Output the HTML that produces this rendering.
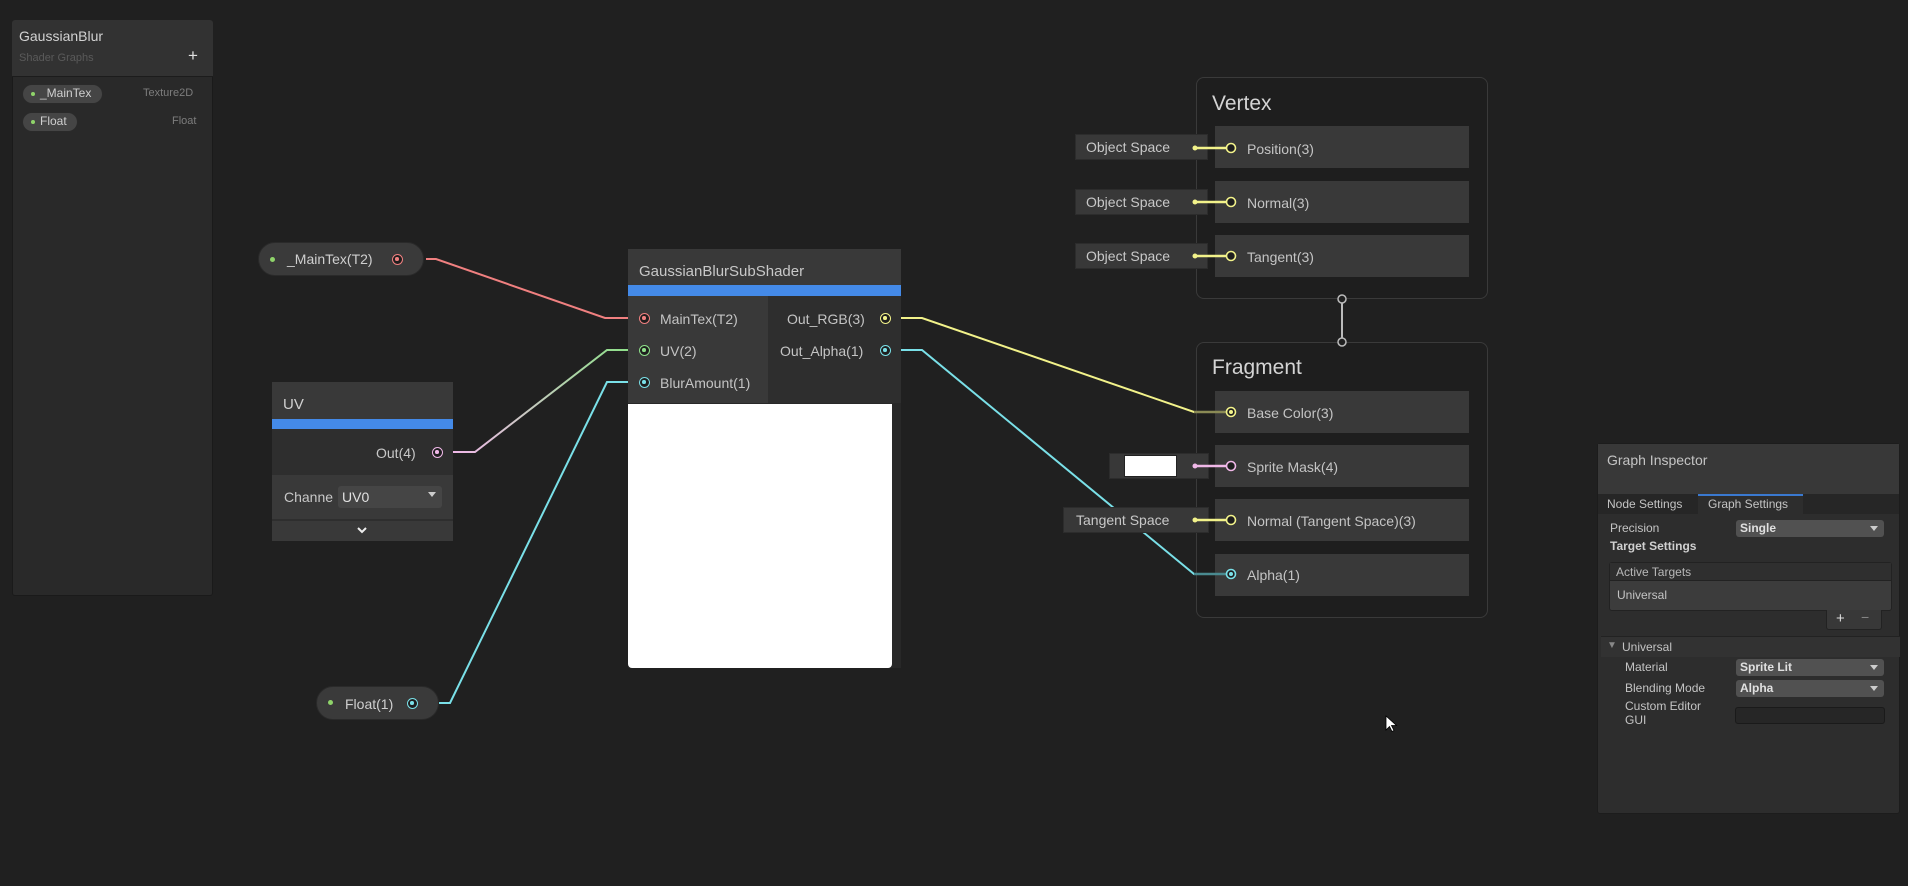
<!DOCTYPE html>
<html><head><meta charset="utf-8"><style>
*{box-sizing:border-box;margin:0;padding:0}
body{width:1908px;height:886px;background:#202020;position:relative;overflow:hidden;font-family:"Liberation Sans",sans-serif;color:#c4c4c4}
.a{position:absolute}
.t{position:absolute;white-space:nowrap}
.pill{position:absolute;background:#3a3a3a;border-radius:18px;border:1px solid #2a2a2a}
.dot{position:absolute;width:5px;height:5px;border-radius:50%;background:#8fd46a}
.port{position:absolute;width:11px;height:11px;border-radius:50%;border:1.6px solid;background:#1e1e1e}
.port i{position:absolute;left:2.2px;top:2.2px;width:3.6px;height:3.6px;border-radius:50%}
.row{position:absolute;background:#393939;left:1215px;width:254px;height:42px}
.box{position:absolute;background:#383838;border:1px solid #2c2c2c;font-size:14px;color:#c8c8c8}
.dd{position:absolute;background:#515151;border-radius:3px;height:17px;font-size:12px;font-weight:bold;color:#e0e0e0;padding:1px 4px}
.dd:after{content:"";position:absolute;right:6px;top:6px;border:4px solid transparent;border-top:5px solid #ccc;border-bottom:0}
</style></head><body>

<!-- blackboard -->
<div class="a" style="left:12px;top:20px;width:201px;height:576px;background:#292929;border:1px solid #1a1a1a;border-radius:3px"></div>
<div class="a" style="left:12px;top:20px;width:201px;height:57px;background:#323232;border-radius:3px 3px 0 0;border-bottom:1px solid #1c1c1c"></div>
<div class="t" style="left:19px;top:28px;font-size:14px;color:#d2d2d2">GaussianBlur</div>
<div class="t" style="left:19px;top:52px;font-size:11px;color:#5a5a5a">Shader Graphs</div>
<div class="t" style="left:188px;top:46px;font-size:17px;color:#e0e0e0">+</div>
<div class="pill" style="left:22px;top:84px;width:81px;height:20px;background:#454545"></div><div class="dot" style="left:31px;top:92px;width:4px;height:4px"></div>
<div class="t" style="left:40px;top:86px;font-size:12px;color:#cfcfcf">_MainTex</div>
<div class="t" style="left:143px;top:87px;font-size:11px;color:#7d7d7d">Texture2D</div>
<div class="pill" style="left:22px;top:112px;width:56px;height:20px;background:#454545"></div><div class="dot" style="left:31px;top:120px;width:4px;height:4px"></div>
<div class="t" style="left:40px;top:114px;font-size:12px;color:#cfcfcf">Float</div>
<div class="t" style="left:172px;top:115px;font-size:11px;color:#7d7d7d">Float</div>

<!-- wires -->
<svg class="a" style="left:0;top:0" width="1908" height="886">
<defs><linearGradient id="g" gradientUnits="userSpaceOnUse" x1="453" y1="452" x2="628" y2="350"><stop offset="0" stop-color="#f0b8e8"/><stop offset="1" stop-color="#8fe08a"/></linearGradient></defs>
<g fill="none" stroke-width="2">
<polyline points="426,259 436,259 605,318 628,318" stroke="#f08080"/>
<polyline points="453,452 475,452 607,350 628,350" stroke="url(#g)"/>
<polyline points="439,703 450,703 607,382 628,382" stroke="#7ae0e8"/>
<polyline points="900,318 922,318 1194,412 1215,412" stroke="#f2f28a"/>
<polyline points="900,350 922,350 1194,574 1215,574" stroke="#7ae0e8"/>
</g>
</svg>

<!-- _MainTex pill -->
<div class="pill" style="left:258px;top:242px;width:166px;height:34px"></div>
<div class="dot" style="left:270px;top:257px"></div>
<div class="t" style="left:287px;top:251px;font-size:14px;color:#cfcfcf">_MainTex(T2)</div>
<div class="port" style="left:392px;top:254px;border-color:#f08080"><i style="background:#f08080"></i></div>

<!-- Float pill -->
<div class="pill" style="left:316px;top:686px;width:123px;height:34px"></div>
<div class="dot" style="left:328px;top:700px"></div>
<div class="t" style="left:345px;top:696px;font-size:14px;color:#cfcfcf">Float(1)</div>
<div class="port" style="left:407px;top:698px;border-color:#7ae0e8"><i style="background:#7ae0e8"></i></div>

<!-- UV node -->
<div class="a" style="left:272px;top:382px;width:181px;height:159px;background:#2e2e2e"></div>
<div class="a" style="left:272px;top:382px;width:181px;height:37px;background:#393939"></div>
<div class="t" style="left:283px;top:396px;font-size:15px;color:#d0d0d0">UV</div>
<div class="a" style="left:272px;top:419px;width:181px;height:10px;background:#448ae8"></div>
<div class="a" style="left:272px;top:429px;width:181px;height:44px;background:#2e2e2e"></div>
<div class="t" style="left:376px;top:445px;font-size:14px;color:#c8c8c8">Out(4)</div>
<div class="port" style="left:432px;top:447px;border-color:#f0b8e8"><i style="background:#f0b8e8"></i></div>
<div class="a" style="left:272px;top:475px;width:181px;height:44px;background:#393939"></div>
<div class="t" style="left:284px;top:489px;font-size:14px;color:#c8c8c8">Channe</div>
<div class="dd" style="left:338px;top:486px;width:104px;height:22px;background:#454545;font-weight:normal;font-size:14px;padding:3px 4px">UV0</div>
<div class="a" style="left:272px;top:521px;width:181px;height:20px;background:#393939"></div>
<svg class="a" style="left:355px;top:525px" width="14" height="10"><path d="M3 3 L7 7 L11 3" fill="none" stroke="#eee" stroke-width="2"/></svg>

<!-- Subshader node -->
<div class="a" style="left:628px;top:249px;width:273px;height:419px;background:#282828"></div>
<div class="a" style="left:628px;top:249px;width:273px;height:36px;background:#393939"></div>
<div class="t" style="left:639px;top:263px;font-size:15px;color:#c8c8c8">GaussianBlurSubShader</div>
<div class="a" style="left:628px;top:285px;width:273px;height:11px;background:#448ae8"></div>
<div class="a" style="left:628px;top:296px;width:140px;height:107px;background:#393939"></div>
<div class="a" style="left:768px;top:296px;width:133px;height:107px;background:#2e2e2e"></div>
<div class="port" style="left:639px;top:313px;border-color:#f08080"><i style="background:#f08080"></i></div>
<div class="t" style="left:660px;top:311px;font-size:14px">MainTex(T2)</div>
<div class="port" style="left:639px;top:345px;border-color:#8fe08a"><i style="background:#8fe08a"></i></div>
<div class="t" style="left:660px;top:343px;font-size:14px">UV(2)</div>
<div class="port" style="left:639px;top:377px;border-color:#7ae0e8"><i style="background:#7ae0e8"></i></div>
<div class="t" style="left:660px;top:375px;font-size:14px">BlurAmount(1)</div>
<div class="t" style="left:787px;top:311px;font-size:14px">Out_RGB(3)</div>
<div class="port" style="left:880px;top:313px;border-color:#f2f28a"><i style="background:#f2f28a"></i></div>
<div class="t" style="left:780px;top:343px;font-size:14px">Out_Alpha(1)</div>
<div class="port" style="left:880px;top:345px;border-color:#7ae0e8"><i style="background:#7ae0e8"></i></div>
<div class="a" style="left:628px;top:404px;width:264px;height:264px;background:#fff;border-radius:0 0 4px 4px"></div>

<!-- Vertex -->
<div class="a" style="left:1196px;top:77px;width:292px;height:222px;border:1.5px solid #3a3a3a;border-radius:8px;background:#1e1e1e"></div>
<div class="t" style="left:1212px;top:92px;font-size:21px;color:#d4d4d4">Vertex</div>
<div class="row" style="top:126px"></div><div class="row" style="top:181px"></div><div class="row" style="top:235px"></div>
<div class="box" style="left:1075px;top:134px;width:133px;height:26px;padding:4px 10px">Object Space</div>
<div class="box" style="left:1075px;top:189px;width:133px;height:26px;padding:4px 10px">Object Space</div>
<div class="box" style="left:1075px;top:243px;width:133px;height:26px;padding:4px 10px">Object Space</div>
<div class="t" style="left:1247px;top:141px;font-size:14px">Position(3)</div>
<div class="t" style="left:1247px;top:195px;font-size:14px">Normal(3)</div>
<div class="t" style="left:1247px;top:249px;font-size:14px">Tangent(3)</div>

<!-- Fragment -->
<div class="a" style="left:1196px;top:342px;width:292px;height:276px;border:1.5px solid #3a3a3a;border-radius:8px;background:#1e1e1e"></div>
<div class="t" style="left:1212px;top:356px;font-size:21px;color:#d4d4d4">Fragment</div>
<div class="row" style="top:391px"></div><div class="row" style="top:445px"></div><div class="row" style="top:499px"></div><div class="row" style="top:554px"></div>
<div class="box" style="left:1109px;top:453px;width:100px;height:26px"></div>
<div class="a" style="left:1124px;top:455px;width:53px;height:22px;background:#fff;border:1px solid #222"></div>
<div class="box" style="left:1063px;top:507px;width:146px;height:26px;padding:4px 12px">Tangent Space</div>
<div class="t" style="left:1247px;top:405px;font-size:14px">Base Color(3)</div>
<div class="t" style="left:1247px;top:459px;font-size:14px">Sprite Mask(4)</div>
<div class="t" style="left:1247px;top:513px;font-size:14px">Normal (Tangent Space)(3)</div>
<div class="t" style="left:1247px;top:567px;font-size:14px">Alpha(1)</div>

<svg class="a" style="left:0;top:0" width="1908" height="886">
<g stroke-width="2.5">
<line x1="1195" y1="148" x2="1226" y2="148" stroke="#f2f28a"/>
<line x1="1195" y1="202" x2="1226" y2="202" stroke="#f2f28a"/>
<line x1="1195" y1="256" x2="1226" y2="256" stroke="#f2f28a"/>
<line x1="1195" y1="466" x2="1226" y2="466" stroke="#f0b8e8"/>
<line x1="1195" y1="520" x2="1226" y2="520" stroke="#f2f28a"/>
<line x1="1194" y1="412" x2="1226" y2="412" stroke="#8a8a55"/>
<line x1="1194" y1="574" x2="1226" y2="574" stroke="#4a8a90"/>
</g>
<g fill="#f2f28a"><circle cx="1195" cy="148" r="2.5"/><circle cx="1195" cy="202" r="2.5"/><circle cx="1195" cy="256" r="2.5"/><circle cx="1195" cy="520" r="2.5"/></g>
<circle cx="1195" cy="466" r="2.5" fill="#f0b8e8"/>
<g fill="#1e1e1e" stroke-width="1.6">
<circle cx="1231" cy="148" r="4.5" stroke="#f2f28a"/><circle cx="1231" cy="202" r="4.5" stroke="#f2f28a"/><circle cx="1231" cy="256" r="4.5" stroke="#f2f28a"/>
<circle cx="1231" cy="412" r="4.5" stroke="#f2f28a"/><circle cx="1231" cy="466" r="4.5" stroke="#f0b8e8"/><circle cx="1231" cy="520" r="4.5" stroke="#f2f28a"/><circle cx="1231" cy="574" r="4.5" stroke="#7ae0e8"/>
</g>
<circle cx="1231" cy="412" r="2" fill="#f2f28a"/><circle cx="1231" cy="574" r="2" fill="#7ae0e8"/>
<line x1="1342" y1="299" x2="1342" y2="342" stroke="#bbb" stroke-width="2"/>
<circle cx="1342" cy="299" r="4" fill="#202020" stroke="#bbb" stroke-width="1.5"/>
<circle cx="1342" cy="342" r="4" fill="#202020" stroke="#bbb" stroke-width="1.5"/>
<path d="M1386 716 v14 l3.5 -3.5 l2.5 5 l2 -1 l-2.5 -5 h5 z" fill="#fff" stroke="#000" stroke-width="0.8"/>
</svg>

<!-- Inspector -->
<div class="a" style="left:1597px;top:443px;width:303px;height:371px;background:#2d2d2d;border:1px solid #1c1c1c;border-radius:3px"></div>
<div class="a" style="left:1598px;top:444px;width:301px;height:50px;background:#383838"></div>
<div class="t" style="left:1607px;top:452px;font-size:14px;color:#c4c4c4">Graph Inspector</div>
<div class="a" style="left:1598px;top:494px;width:301px;height:20px;background:#262626"></div>
<div class="t" style="left:1607px;top:497px;font-size:12px">Node Settings</div>
<div class="a" style="left:1698px;top:494px;width:105px;height:20px;background:#2d2d2d;border-top:2px solid #3a79d0"></div>
<div class="t" style="left:1708px;top:497px;font-size:12px">Graph Settings</div>
<div class="t" style="left:1610px;top:521px;font-size:12px">Precision</div>
<div class="dd" style="left:1736px;top:520px;width:148px">Single</div>
<div class="t" style="left:1610px;top:539px;font-size:12px;font-weight:bold;color:#d0d0d0">Target Settings</div>
<div class="a" style="left:1609px;top:562px;width:283px;height:49px;background:#3c3c3c;border:1px solid #222;border-radius:3px"></div>
<div class="a" style="left:1610px;top:563px;width:281px;height:18px;background:#2f2f2f;border-bottom:1px solid #222"></div>
<div class="t" style="left:1616px;top:565px;font-size:12px;color:#b8b8b8">Active Targets</div>
<div class="t" style="left:1617px;top:588px;font-size:12px">Universal</div>
<div class="a" style="left:1826px;top:610px;width:56px;height:20px;background:#383838;border:1px solid #222;border-top:0;border-radius:0 0 3px 3px"></div>
<div class="t" style="left:1836px;top:610px;font-size:15px;color:#ddd">+</div>
<div class="t" style="left:1861px;top:609px;font-size:14px;color:#888">−</div>
<div class="a" style="left:1601px;top:636px;width:299px;height:21px;background:#323232;border-top:1px solid #222"></div>
<div class="t" style="left:1607px;top:640px;font-size:10px;color:#888">▼</div>
<div class="t" style="left:1622px;top:640px;font-size:12px">Universal</div>
<div class="t" style="left:1625px;top:660px;font-size:12px">Material</div>
<div class="dd" style="left:1736px;top:659px;width:148px">Sprite Lit</div>
<div class="t" style="left:1625px;top:681px;font-size:12px">Blending Mode</div>
<div class="dd" style="left:1736px;top:680px;width:148px">Alpha</div>
<div class="t" style="left:1625px;top:699px;font-size:12px;line-height:14px">Custom Editor<br>GUI</div>
<div class="a" style="left:1735px;top:707px;width:150px;height:17px;background:#262626;border:1px solid #1a1a1a;border-radius:3px"></div>
</body></html>
